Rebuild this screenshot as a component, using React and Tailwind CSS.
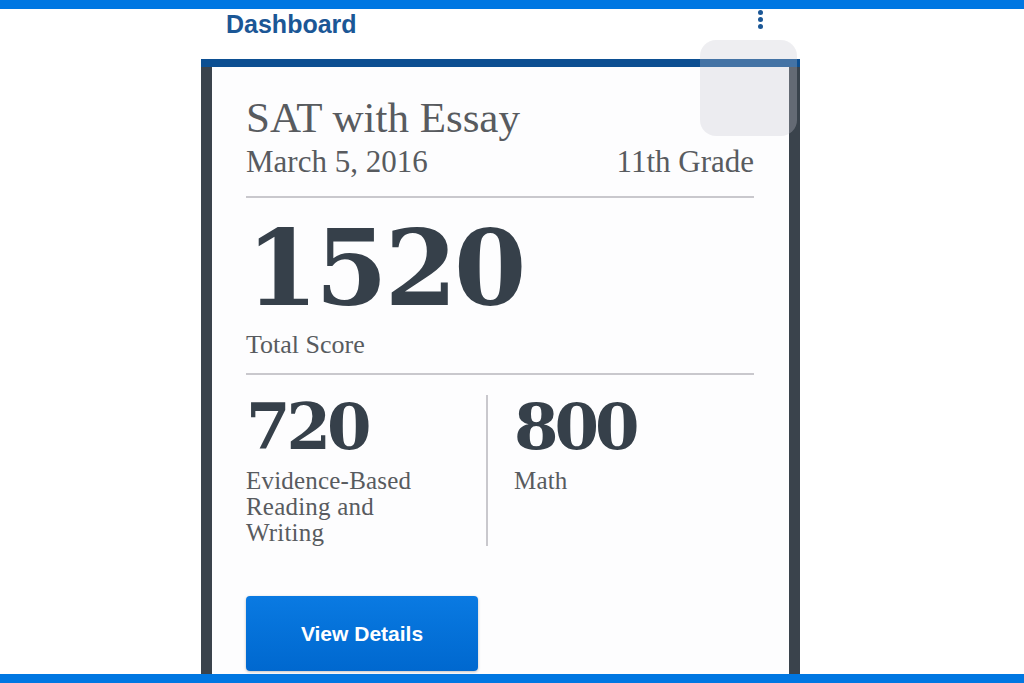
export default function App() {
  return (
    <div className="flex h-[683px] w-[1024px] flex-col overflow-hidden bg-white">
      <div className="h-[9px] shrink-0 bg-[#0077e2]" />

      <div className="relative min-h-0 flex-1 overflow-hidden">
        <div className="ml-[201px] w-[599px]">
          {/* header */}
          <div className="flex h-[50px] items-start justify-between pl-[25px] pr-[37px]">
            <div className="font-['Liberation_Sans',Arial,sans-serif] text-[25px] font-bold leading-[30px] text-[#1b5796]">
              Dashboard
            </div>
            <div className="flex flex-col gap-[2px] pt-[1px]">
              <span className="h-[5px] w-[5px] rounded-full bg-[#1b5796]" />
              <span className="h-[5px] w-[5px] rounded-full bg-[#1b5796]" />
              <span className="h-[5px] w-[5px] rounded-full bg-[#1b5796]" />
            </div>
          </div>

          {/* card */}
          <div className="border-t-[8px] border-t-[#0c4f92]">
            <div className="border-x-[11px] border-x-[#3a434c] bg-[#fdfdfe] pl-[34px] pr-[35px] pt-[27px] pb-10 font-['Liberation_Serif',serif] text-[#585b5f]">
              <div className="text-[43px] leading-[48px]">SAT with Essay</div>
              <div className="mt-[2px] flex justify-between text-[31px] leading-[36px]">
                <span>March 5, 2016</span>
                <span>11th Grade</span>
              </div>
              <div className="mt-[16px] h-[2px] bg-[#c9c8cd]" />

              <div className="mt-[19px] font-['DejaVu_Serif',serif] text-[104px] font-bold leading-none tracking-[-3px] text-[#36404a]">
                1520
              </div>
              <div className="mt-[9px] text-[26px] leading-[30px]">Total Score</div>
              <div className="mt-[13px] h-[2px] bg-[#c9c8cd]" />

              <div className="mt-[20px] flex">
                <div className="w-[242px] border-r-2 border-r-[#c9c8cd]">
                  <div className="font-['DejaVu_Serif',serif] text-[64px] font-bold leading-none tracking-[-4px] text-[#36404a]">
                    720
                  </div>
                  <div className="mt-[9px] text-[25px] leading-[26px] tracking-[0.2px]">
                    Evidence-Based
                    <br />
                    Reading and
                    <br />
                    Writing
                  </div>
                </div>
                <div className="pl-[26px]">
                  <div className="font-['DejaVu_Serif',serif] text-[64px] font-bold leading-none tracking-[-4px] text-[#36404a]">
                    800
                  </div>
                  <div className="mt-[9px] text-[25px] leading-[26px] tracking-[0.2px]">Math</div>
                </div>
              </div>

              <button className="mt-[50px] flex h-[75px] w-[232px] items-center justify-center rounded-[4px] bg-gradient-to-b from-[#0a7ae2] to-[#0068cf] font-['Liberation_Sans',Arial,sans-serif] text-[21px] font-bold text-white shadow-[0_1px_3px_rgba(0,0,0,0.25)]">
                View Details
              </button>
            </div>
          </div>
        </div>

        {/* translucent overlay square */}
        <div className="absolute left-[700px] top-[31px] h-[96px] w-[97px] rounded-[16px] bg-[#c8c8d2]/30" />
      </div>

      <div className="h-[9px] shrink-0 bg-[#0077e2]" />
    </div>
  );
}
